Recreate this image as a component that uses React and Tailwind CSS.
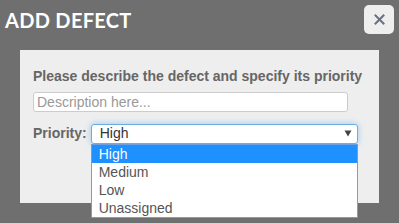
import React from "react";

const OPTIONS = ["High", "Medium", "Low", "Unassigned"];

export default function App() {
  return (
    <div className="w-[399px] h-[223px] bg-[#6f6f6f] overflow-hidden font-['Liberation_Sans',Arial,sans-serif]">
      {/* Header */}
      <div className="flex items-start justify-between h-[50px] pl-[5px] pr-[5px]">
        <h1 className="mt-[9px] text-[20px] leading-[22px] font-bold text-white tracking-[0.3px] font-['Lato',sans-serif]">
          ADD DEFECT
        </h1>
        <button className="mt-[5px] w-[30px] h-[29px] rounded-[5px] bg-[#eeeeee] flex items-center justify-center">
          <svg width="11" height="11" viewBox="0 0 11 11">
            <path d="M1.5 1.5 L9.5 9.5 M9.5 1.5 L1.5 9.5" stroke="#6a7080" strokeWidth="2" strokeLinecap="square" />
          </svg>
        </button>
      </div>

      {/* Panel */}
      <div className="mx-[20px] h-[153px] bg-[#eeeeee] px-[13px] pt-[18px]">
        <p className="text-[14px] leading-[16px] font-bold text-[#666666] whitespace-nowrap">
          Please describe the defect and specify its priority
        </p>
        <div className="mt-[8px] w-[315px] h-[20px] rounded-[3px] border border-[#cccccc] bg-white flex items-center px-[3px]">
          <span className="text-[14px] text-[#999999]">Description here...</span>
        </div>
        <div className="mt-[11px] flex items-center gap-[4px]">
          <span className="text-[14px] font-bold text-[#666666]">Priority:</span>
          <div className="relative">
            <div className="w-[267px] h-[20px] rounded-[3px] border border-[#66afe9] bg-white shadow-[0_0_6px_rgba(102,175,233,0.6)] flex items-center justify-between pl-[8px] pr-[5px]">
              <span className="text-[14px] text-[#333333]">High</span>
              <svg width="8" height="7" viewBox="0 0 8 7">
                <path d="M0.5 0.5 L7.5 0.5 L4 6.5 Z" fill="#444444" />
              </svg>
            </div>
            <ul className="absolute left-0 top-[20px] w-[267px] bg-white border border-[#6f9fdc] z-10">
              {OPTIONS.map((o, i) => (
                <li
                  key={o}
                  className={
                    i === 0
                      ? "h-[18px] leading-[18px] pl-[7px] text-[14px] bg-[#1e90ff] text-white"
                      : "h-[18px] leading-[18px] pl-[7px] text-[14px] text-[#555555]"
                  }
                >
                  {o}
                </li>
              ))}
            </ul>
          </div>
        </div>
      </div>
    </div>
  );
}
